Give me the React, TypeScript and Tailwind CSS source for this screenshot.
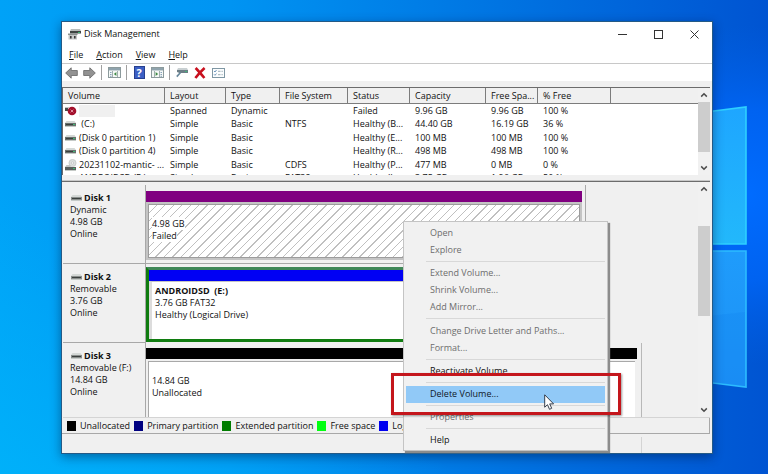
import type { ReactNode } from "react";

type Volume = {
  name: string;
  icon: "failed" | "drive" | "disc";
  layout: string;
  type: string;
  fs: string;
  status: string;
  capacity: string;
  free: string;
  percent: string;
};

const volumes: Volume[] = [
  { name: "", icon: "failed", layout: "Spanned", type: "Dynamic", fs: "", status: "Failed", capacity: "9.96 GB", free: "9.96 GB", percent: "100 %" },
  { name: "\u00a0(C:)", icon: "drive", layout: "Simple", type: "Basic", fs: "NTFS", status: "Healthy (B...", capacity: "44.40 GB", free: "16.19 GB", percent: "36 %" },
  { name: "(Disk 0 partition 1)", icon: "drive", layout: "Simple", type: "Basic", fs: "", status: "Healthy (E...", capacity: "100 MB", free: "100 MB", percent: "100 %" },
  { name: "(Disk 0 partition 4)", icon: "drive", layout: "Simple", type: "Basic", fs: "", status: "Healthy (R...", capacity: "498 MB", free: "498 MB", percent: "100 %" },
  { name: "20231102-mantic- ...", icon: "disc", layout: "Simple", type: "Basic", fs: "CDFS", status: "Healthy (P...", capacity: "477 MB", free: "0 MB", percent: "0 %" },
  { name: "ANDROIDSD (E:)", icon: "drive", layout: "Simple", type: "Basic", fs: "FAT32", status: "Healthy (L...", capacity: "3.75 GB", free: "1.96 GB", percent: "50 %" },
];

const columns = ["Volume", "Layout", "Type", "File System", "Status", "Capacity", "Free Spa...", "% Free"];

const menuGroups: { label: string; enabled?: boolean; active?: boolean }[][] = [
  [{ label: "Open" }, { label: "Explore" }],
  [{ label: "Extend Volume..." }, { label: "Shrink Volume..." }, { label: "Add Mirror..." }],
  [{ label: "Change Drive Letter and Paths..." }, { label: "Format..." }],
  [{ label: "Reactivate Volume", enabled: true }],
  [{ label: "Delete Volume...", enabled: true, active: true }],
  [{ label: "Properties" }],
  [{ label: "Help", enabled: true }],
];

const legend = [
  { label: "Unallocated", color: "bg-black" },
  { label: "Primary partition", color: "bg-[#000080]" },
  { label: "Extended partition", color: "bg-[#007c00]" },
  { label: "Free space", color: "bg-[#00ff10]" },
  { label: "Logical drive", color: "bg-[#0000f0]" },
];

function Wallpaper() {
  return (
    <svg className="absolute inset-0 h-full w-full" viewBox="0 0 768 474" preserveAspectRatio="none" aria-hidden="true">
      <defs>
        <linearGradient id="sky" x1="0" x2="1" y1="0" y2="0">
          <stop offset="0" stopColor="#00a2f7" />
          <stop offset="0.3" stopColor="#0094f2" />
          <stop offset="0.65" stopColor="#0074e2" />
          <stop offset="1" stopColor="#0054d2" />
        </linearGradient>
        <radialGradient id="glow" cx="745" cy="195" r="170" gradientUnits="userSpaceOnUse">
          <stop offset="0" stopColor="#006cff" />
          <stop offset="0.5" stopColor="#0066f8" stopOpacity="0.8" />
          <stop offset="1" stopColor="#0060e8" stopOpacity="0" />
        </radialGradient>
        <linearGradient id="corner" x1="0" x2="1" y1="1" y2="0">
          <stop offset="0" stopColor="#00b4fa" stopOpacity="0.8" />
          <stop offset="0.3" stopColor="#00b4fa" stopOpacity="0" />
        </linearGradient>
        <linearGradient id="paneTop" x1="0" x2="0" y1="0" y2="1">
          <stop offset="0" stopColor="#1ea6ff" />
          <stop offset="1" stopColor="#22b8fb" />
        </linearGradient>
        <linearGradient id="paneBottom" x1="0" x2="0" y1="0" y2="1">
          <stop offset="0" stopColor="#1f9cfb" />
          <stop offset="1" stopColor="#1c90f6" />
        </linearGradient>
      </defs>
      <rect width="768" height="474" fill="url(#sky)" />
      <rect width="768" height="474" fill="url(#corner)" />
      <rect x="560" width="208" height="474" fill="url(#glow)" />
      <path d="M690 114 L746 107 V244 H690Z" fill="url(#paneTop)" stroke="#2ed0ff" strokeWidth="1.6" />
      <path d="M690 251 H746 V387 L690 380Z" fill="url(#paneBottom)" stroke="#2cbcff" strokeWidth="1.6" />
      <path d="M690 318 L745 312 V386 L690 380Z" fill="#1486f0" opacity="0.35" />
    </svg>
  );
}

function DriveIcon({ plain = false }: { plain?: boolean }) {
  return (
    <svg className="shrink-0" width="11" height="6" viewBox="0 0 11 6" aria-hidden="true">
      <path d="M1.5 0H9.5L11 2H0Z" fill="#d4d8d6" />
      <rect y="2" width="11" height="3" fill={plain ? "#8a8e8c" : "#6a706d"} />
      <rect x="1" y="3" width="9" height="1" fill="#3b403e" />
      {!plain && <rect x="8" y="3" width="2" height="1" fill="#3fb873" />}
      <rect y="5" width="11" height="1" fill="#c5cac7" />
    </svg>
  );
}

function VolumeIcon({ kind }: { kind: Volume["icon"] }) {
  if (kind === "failed") {
    return (
      <svg className="shrink-0" width="12" height="11" viewBox="0 0 12 11" aria-hidden="true">
        <rect x="0" y="2" width="4" height="1" fill="#c5c5c5" />
        <rect x="0" y="3" width="3" height="3" fill="#4a4a4a" />
        <circle cx="7" cy="6" r="4.3" fill="#a3102c" />
        <path d="M5.6 4.6 8.4 7.4M8.4 4.6 5.6 7.4" stroke="#e59aa8" strokeWidth="0.9" />
      </svg>
    );
  }
  if (kind === "disc") {
    return (
      <svg className="shrink-0" width="12" height="12" viewBox="0 0 12 12" aria-hidden="true">
        <circle cx="7.5" cy="4" r="3.6" fill="#dcdfde" stroke="#b9bdbb" strokeWidth="0.6" />
        <circle cx="7.5" cy="4" r="1.2" fill="#f4f4f4" stroke="#b0b4b2" strokeWidth="0.5" />
        <path d="M1.5 6H5L6 8H0Z" fill="#c3c6c4" />
        <rect y="8" width="11" height="3" fill="#5a605d" />
        <rect x="8" y="9" width="2" height="1" fill="#3fb873" />
        <rect y="11" width="11" height="1" fill="#c5cac7" />
      </svg>
    );
  }
  return <DriveIcon />;
}

function AppIcon() {
  return (
    <svg width="13" height="11" viewBox="0 0 13 11" aria-hidden="true">
      <path d="M3 0H12L13 2H2Z" fill="#b9bdbb" />
      <path d="M2 2H13V4.5H2Z" fill="#3f4442" />
      <rect x="10" y="3" width="2" height="1" fill="#3fb873" />
      <path d="M0.5 5H9V10.5H0.5Z" fill="#c4c7c6" />
      <path d="M0 4.5H9.5V6H0Z" fill="#8d9290" />
      <rect x="2" y="7" width="1.6" height="2.5" fill="#3a3a3a" />
      <rect x="6" y="7" width="1.6" height="2.5" fill="#3a3a3a" />
    </svg>
  );
}

function Arrow({ flip = false }: { flip?: boolean }) {
  return (
    <svg width="13" height="12" viewBox="0 0 13 12" className={flip ? "-scale-x-100" : ""} aria-hidden="true">
      <path d="M0.7 6 6.2 0.8V3.5H12.3V8.5H6.2V11.2Z" fill="#929292" stroke="#6f6f6f" strokeWidth="0.9" strokeLinejoin="round" />
    </svg>
  );
}

function PaneIcon({ right = false }: { right?: boolean }) {
  return (
    <svg width="13" height="11" viewBox="0 0 13 11" className={right ? "-scale-x-100" : ""} aria-hidden="true">
      <rect x="0.5" y="0.5" width="12" height="10" fill="#f5f8f6" stroke="#8c9a9c" />
      <rect x="1" y="1" width="11" height="2" fill="#8fa3ad" />
      <rect x="1" y="3" width="11" height="1" fill="#c8d2d6" />
      <path d="M4.5 4V10M9.5 4V10" stroke="#8c9a9c" strokeWidth="0.8" />
      <path d="M2 5.5H3.5M2 7.5H3.5M2 9.3H3.5" stroke="#6b8bab" strokeWidth="0.8" />
      <path d="M8.4 5V9L5.8 7Z" fill="#3f8a45" />
    </svg>
  );
}

function HelpIcon() {
  return (
    <span className="flex h-[13px] w-[11px] items-center justify-center border border-[#27408f] bg-[#3c5fc4] text-[11px] leading-[11px] font-bold text-white">
      ?
    </span>
  );
}

function ConnectIcon() {
  return (
    <svg width="12" height="11" viewBox="0 0 12 11" aria-hidden="true">
      <path d="M2 1H11L12 3H1Z" fill="#c9d0d2" />
      <path d="M1 3H12V6H3.5L1 5Z" fill="#6d7e86" />
      <rect x="9" y="4" width="2" height="1" fill="#43b57a" />
      <path d="M4.5 5.5 0.8 9.6" stroke="#68879b" strokeWidth="1.6" />
    </svg>
  );
}

function DeleteIcon() {
  return (
    <svg width="12" height="12" viewBox="0 0 12 12" aria-hidden="true">
      <path d="M1.6 1C4 3.4 7.5 7.5 10.4 11M10.6 1C7.5 3.8 4 7.5 1.4 11" stroke="#c8101e" strokeWidth="2.6" fill="none" />
    </svg>
  );
}

function ListIcon() {
  return (
    <svg width="13" height="10" viewBox="0 0 13 10" aria-hidden="true">
      <rect x="0.5" y="0.5" width="12" height="9" fill="#fbfdfe" stroke="#7f97a4" />
      <path d="M2 3 3 4 4.5 2M2 6.3 3 7.3 4.5 5.5" stroke="#4c7fae" strokeWidth="0.8" fill="none" />
      <path d="M6 3.3H8.5M6 6.7H8.5M9.5 3.3H10.8M9.5 6.7H10.8" stroke="#8fa3ad" strokeWidth="0.9" />
    </svg>
  );
}

function ToolButton({ label, children }: { label: string; children: ReactNode }) {
  return (
    <button type="button" aria-label={label} className="flex h-4 w-[18px] items-center justify-center">
      {children}
    </button>
  );
}

function Divider() {
  return <span className="mx-[3px] h-[15px] w-px bg-[#a0a0a0]" />;
}

function Chevron({ down = false }: { down?: boolean }) {
  return (
    <svg width="8" height="6" viewBox="0 0 8 6" className={down ? "rotate-180" : ""} aria-hidden="true">
      <path d="M1.2 4.6 4 1.8 6.8 4.6" stroke="#4c4c4c" strokeWidth="1.5" fill="none" />
    </svg>
  );
}

function ScrollBar({ thumb }: { thumb: string }) {
  return (
    <div className="flex w-3 shrink-0 flex-col bg-[#f1f1f1]">
      <button type="button" aria-label="Scroll up" className="flex h-[14px] shrink-0 items-center justify-center">
        <Chevron />
      </button>
      <div className="flex-1">
        <div className={"bg-[#cdcdcd] " + thumb} />
      </div>
      <button type="button" aria-label="Scroll down" className="flex h-[14px] shrink-0 items-center justify-center">
        <Chevron down />
      </button>
    </div>
  );
}

function VolumeColumns() {
  return (
    <colgroup>
      <col className="w-[102px]" />
      <col className="w-[61px]" />
      <col className="w-[54px]" />
      <col className="w-[68px]" />
      <col className="w-[62px]" />
      <col className="w-[76px]" />
      <col className="w-[52px]" />
      <col className="w-[73px]" />
      <col />
    </colgroup>
  );
}

function DiskRow({ name, lines, children }: { name: string; lines: string[]; children: ReactNode }) {
  return (
    <section className="flex h-[79px] shrink-0">
      <div className="w-[83px] shrink-0 border-r border-b border-[#a8a8a8] pt-[7px] pl-[7px]">
        <h2 className="flex items-center gap-[2px] pl-px font-bold text-[#111]">
          <DriveIcon plain />
          {name}
        </h2>
        {lines.map((line) => (
          <p key={line}>{line}</p>
        ))}
      </div>
      <div className="min-w-0 flex-1">{children}</div>
    </section>
  );
}

function ContextMenu() {
  return (
    <div
      role="menu"
      className="absolute top-[199px] left-[341px] flex h-[230px] w-[205px] flex-col border border-[#c4c4c4] bg-[#f1f1f1] px-[2px] pt-[2px] pb-px shadow-[2px_2px_1px_#8c8c8c]"
    >
      {menuGroups.map((group, i) => (
        <div key={group[0].label} className="contents">
          {i > 0 && (
            <div className="flex h-[6px] shrink-0 items-center pl-5">
              <div className="h-px w-full bg-[#d8d8d8]" />
            </div>
          )}
          {group.map((item) => (
            <button
              key={item.label}
              type="button"
              role="menuitem"
              aria-disabled={!item.enabled}
              className={
                "flex min-h-0 flex-1 items-center pl-6 text-left " +
                (item.active ? "bg-[#91c9f7] text-[#101828]" : item.enabled ? "text-[#111]" : "text-[#6d6d6d]")
              }
            >
              {item.label}
            </button>
          ))}
        </div>
      ))}
    </div>
  );
}

export default function App() {
  return (
    <div className="relative min-h-screen overflow-hidden bg-[#0088ee] pt-[21px] pr-[55px] pb-5 pl-[61px] font-['Open_Sans','Noto_Sans',sans-serif] text-[9px] leading-3 text-[#111]">
      <Wallpaper />
      <main className="relative border border-[#245a86] bg-[#f0f0f0] shadow-[0_3px_10px_rgba(0,20,60,0.45)]">
        <header className="flex h-6 items-center bg-white pl-[6px]">
          <AppIcon />
          <h1 className="pl-[3px]">Disk Management</h1>
          <div className="ml-auto flex">
            <button type="button" aria-label="Minimize" className="flex h-6 w-9 items-center justify-center">
              <svg width="9" height="9" viewBox="0 0 9 9"><path d="M0 4.5H9" stroke="#333" /></svg>
            </button>
            <button type="button" aria-label="Maximize" className="flex h-6 w-9 items-center justify-center">
              <svg width="9" height="9" viewBox="0 0 9 9"><rect x="0.5" y="0.5" width="8" height="8" stroke="#333" fill="none" /></svg>
            </button>
            <button type="button" aria-label="Close" className="flex h-6 w-9 items-center justify-center">
              <svg width="9" height="9" viewBox="0 0 9 9"><path d="M0.5 0.5 8.5 8.5M8.5 0.5 0.5 8.5" stroke="#333" /></svg>
            </button>
          </div>
        </header>
        <nav className="flex h-[18px] items-center gap-[13px] border-b border-[#c8c8c8] bg-white pl-[7px]">
          {["File", "Action", "View", "Help"].map((item) => (
            <button key={item} type="button">
              <span className="underline underline-offset-1">{item[0]}</span>
              {item.slice(1)}
            </button>
          ))}
        </nav>
        <div className="flex h-[17px] items-center bg-white">
          <ToolButton label="Back"><Arrow /></ToolButton>
          <ToolButton label="Forward"><Arrow flip /></ToolButton>
          <Divider />
          <ToolButton label="Show console tree"><PaneIcon /></ToolButton>
          <Divider />
          <ToolButton label="Help"><HelpIcon /></ToolButton>
          <ToolButton label="Show action pane"><PaneIcon right /></ToolButton>
          <Divider />
          <ToolButton label="Connect"><ConnectIcon /></ToolButton>
          <ToolButton label="Delete"><DeleteIcon /></ToolButton>
          <ToolButton label="Properties"><ListIcon /></ToolButton>
        </div>

        <div className="mt-[6px] mr-[2px] flex h-[88px] border-t border-l border-[#6c6c6c]">
          <div className="min-w-0 flex-1 overflow-hidden bg-white">
            <table className="w-full table-fixed border-separate border-spacing-0 whitespace-nowrap">
              <VolumeColumns />
              <thead>
                <tr className="h-4 bg-[#f0f0f0]">
                  {columns.map((c) => (
                    <th key={c} scope="col" className="border-r border-b border-[#7c7c7c] p-0 pl-[5px] text-left font-normal">
                      {c}
                    </th>
                  ))}
                  <td className="border-b border-[#7c7c7c] p-0" />
                </tr>
              </thead>
            </table>
            <table className="h-[81px] w-full table-fixed border-separate border-spacing-0 whitespace-nowrap" aria-label="Volumes">
              <VolumeColumns />
              <tbody>
                {volumes.map((v, i) => (
                  <tr key={i}>
                    <td className="p-0 pl-[2px]">
                      <span className="flex h-3 items-center">
                        <span className="flex w-[14px] shrink-0"><VolumeIcon kind={v.icon} /></span>
                        {v.name || <span className="h-3 w-9 bg-[#f0f0f0]" />}
                      </span>
                    </td>
                    {[v.layout, v.type, v.fs, v.status, v.capacity, v.free, v.percent].map((text, j) => (
                      <td key={j} className="p-0 pl-[5px]">{text}</td>
                    ))}
                    <td className="p-0" />
                  </tr>
                ))}
              </tbody>
            </table>
          </div>
          <ScrollBar thumb="h-[50px]" />
        </div>

        <div className="mt-[5px] mr-[2px] h-[2px] border-b border-[#6c6c6c] bg-[#c8c8c8]" />

        <div className="mr-[2px] ml-px flex h-[236px] border-b border-[#d4d4d4]">
          <div className="min-w-0 flex-1 overflow-hidden pt-[3px]">
            <DiskRow name="Disk 1" lines={["Dynamic", "4.98 GB", "Online"]}>
              <div className="mr-[112px] h-full border-r border-b border-[#a8a8a8] pt-[6px] pr-[3px] pb-[3px]">
                <div className="flex h-full flex-col bg-[#c4c4c4]">
                  <div className="h-[11px] bg-[#800080]" />
                  <div className="m-[2px] flex-1 border border-[#9c9c9c] bg-[repeating-linear-gradient(135deg,#fff_0px,#fff_5px,#c0c0c0_5px,#c0c0c0_6px)] pt-[13px] pl-[3px]">
                    <p><span className="bg-white">4.98 GB</span></p>
                    <p><span className="bg-white">Failed</span></p>
                  </div>
                </div>
              </div>
            </DiskRow>
            <DiskRow name="Disk 2" lines={["Removable", "3.76 GB", "Online"]}>
              <div className="mr-[112px] h-full pt-[3px] pb-px">
                <div className="flex h-full flex-col border-[3px] border-[#107c10] border-t-[#3f8757]">
                  <div className="h-[11px] bg-[#0000f4]" />
                  <div className="flex-1 border-t border-l-[3px] border-[#c4c4c4] border-l-[#dcdcdc] bg-white pt-[3px] pl-[3px]">
                    <h3 className="font-bold">ANDROIDSD&nbsp; (E:)</h3>
                    <p>3.76 GB FAT32</p>
                    <p>Healthy (Logical Drive)</p>
                  </div>
                </div>
              </div>
            </DiskRow>
            <DiskRow name="Disk 3" lines={["Removable (F:)", "14.84 GB", "Online"]}>
              <div className="mr-[56px] h-[75px] border-r border-b border-[#b8b8b8] pt-[5px] pr-1">
                <div className="flex h-full flex-col bg-[#f0f0f0]">
                  <div className="h-[11px] bg-black" />
                  <div className="mx-[2px] mt-[2px] flex-1 border-t border-l border-[#a8a8a8] bg-white pt-[13px] pl-[3px]">
                    <p>14.84 GB</p>
                    <p>Unallocated</p>
                  </div>
                </div>
              </div>
            </DiskRow>
          </div>
          <ScrollBar thumb="mt-[30px] h-[90px]" />
        </div>

        <ul className="mr-[2px] flex h-4 items-center gap-1 border-r border-b border-[#a8a8a8] pl-[5px]">
          {legend.map((l) => (
            <li key={l.label} className="flex items-center gap-1 whitespace-nowrap">
              <span className={"h-[10px] w-[9px] " + l.color} />
              {l.label}
            </li>
          ))}
        </ul>
        <footer className="flex h-[19px] justify-end pt-[3px] pr-[70px]">
          <span className="w-px bg-[#d4d4d4]" />
        </footer>

        <ContextMenu />
        <div className="pointer-events-none absolute top-[351px] left-[329px] h-[42px] w-[230px] border-[3px] border-[#c4161c] shadow-[1px_1px_2px_rgba(0,0,0,0.4)]" />
        <svg className="absolute top-[372px] left-[482px]" width="11" height="17" viewBox="0 0 11 17" aria-hidden="true">
          <path d="M0.7 0.8V13.2L3.5 10.7 5.5 15.3 7.7 14.3 5.7 9.9H9.6Z" fill="#fff" stroke="#222b3a" strokeWidth="0.9" />
        </svg>
      </main>
    </div>
  );
}
